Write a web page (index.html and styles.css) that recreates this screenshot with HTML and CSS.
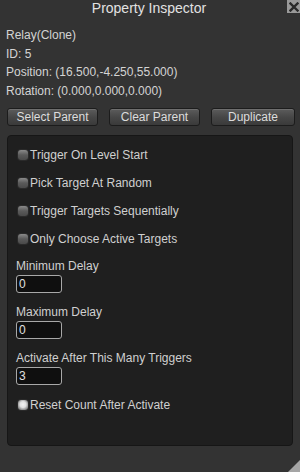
FILE: index.html
```html
<!DOCTYPE html>
<html lang="en">
<head>
  <meta charset="UTF-8">
  <title>Property Inspector</title>
  <link rel="stylesheet" href="styles.css">
</head>
<body>
  <div class="window">
    <div class="title-bar">
      <span class="title">Property Inspector</span>
      <span class="close-btn">
        <svg width="10" height="10" viewBox="0 0 10 10">
          <path d="M1.5 1.5 L8.5 8.5 M8.5 1.5 L1.5 8.5" stroke="#2a2a2a" stroke-width="2.4" stroke-linecap="square"/>
        </svg>
      </span>
    </div>

    <div class="info">
      <div>Relay(Clone)</div>
      <div>ID: 5</div>
      <div>Position: (16.500,-4.250,55.000)</div>
      <div>Rotation: (0.000,0.000,0.000)</div>
    </div>

    <div class="buttons">
      <div class="btn btn-wide">Select Parent</div>
      <div class="btn btn-wide">Clear Parent</div>
      <div class="btn">Duplicate</div>
    </div>

    <div class="panel">
      <div class="check-row"><span class="box"></span>Trigger On Level Start</div>
      <div class="check-row"><span class="box"></span>Pick Target At Random</div>
      <div class="check-row"><span class="box"></span>Trigger Targets Sequentially</div>
      <div class="check-row check-before"><span class="box"></span>Only Choose Active Targets</div>

      <div class="field">
        <div class="field-label">Minimum Delay</div>
        <div class="text-input">0</div>
      </div>
      <div class="field">
        <div class="field-label">Maximum Delay</div>
        <div class="text-input">0</div>
      </div>
      <div class="field">
        <div class="field-label">Activate After This Many Triggers</div>
        <div class="text-input">3</div>
      </div>

      <div class="check-row check-last"><span class="box checked"></span>Reset Count After Activate</div>
    </div>

    <div class="resize-grip"></div>
  </div>
</body>
</html>
```

FILE: styles.css
```css
html, body {
  margin: 0;
  padding: 0;
}

body {
  background-color: #333333;
  font-family: "Liberation Sans", Arial, sans-serif;
  font-size: 12px;
  color: #d4d4d4;
}

.window {
  position: relative;
  width: 300px;
  height: 472px;
  overflow: hidden;
}

.title-bar {
  height: 17px;
  text-align: center;
}

.title {
  display: inline-block;
  font-size: 14px;
  line-height: 16px;
  color: #e2e2e2;
  padding-right: 2px;
}

.close-btn {
  position: absolute;
  top: 0;
  right: 0;
  width: 13px;
  height: 13px;
  background: #9a9a9a;
  display: flex;
  align-items: center;
  justify-content: center;
}

.info {
  padding: 9px 0 0 6px;
  line-height: 18.5px;
}

.buttons {
  display: flex;
  gap: 11px;
  padding: 8px 7px 0 7px;
}

.btn {
  flex: 0 0 82px;
  height: 16px;
  line-height: 16px;
  text-align: center;
  color: #dcdcdc;
  border: 1px solid #1c1c1c;
  border-radius: 3px;
  background: linear-gradient(to bottom, #5c5c5c, #474747 50%, #3a3a3a);
  box-shadow: inset 0 1px 0 rgba(255, 255, 255, 0.12);
}

.btn-wide {
  flex-basis: 89px;
}

.panel {
  margin: 9px 7px 0 7px;
  height: 311px;
  box-sizing: border-box;
  background: #1f1f1f;
  border: 1px solid #161616;
  border-radius: 4px;
  padding: 11px 0 0 8px;
}

.check-row {
  display: flex;
  align-items: center;
  height: 16px;
  margin-bottom: 12px;
  color: #d0d0d0;
}

.check-before {
  margin-bottom: 11px;
}

.box {
  width: 10px;
  height: 10px;
  border-radius: 3px;
  margin: 0 2px 0 2px;
  background: linear-gradient(to bottom, #8a8a8a, #5a5a5a 50%, #4a4a4a);
  box-shadow: 0 0 0 1px #2a2a2a;
}

.box.checked {
  background: radial-gradient(circle at 50% 45%, #f2f2f2 0, #e0e0e0 3px, #9a9a9a 5px, #6a6a6a 7px);
}

.field {
  margin-bottom: 11px;
}

.field-label {
  line-height: 16px;
  color: #d0d0d0;
  padding-bottom: 1px;
}

.text-input {
  width: 42px;
  height: 16px;
  line-height: 16px;
  padding-left: 2px;
  border: 1px solid #a8a8a8;
  border-radius: 3px;
  background: #0f0f0f;
  color: #e0e0e0;
}

.check-last {
  margin-top: 12px;
}

.resize-grip {
  position: absolute;
  right: 0;
  bottom: 0;
  width: 0;
  height: 0;
  border-left: 12px solid transparent;
  border-bottom: 12px solid #a5a5a5;
}
```
